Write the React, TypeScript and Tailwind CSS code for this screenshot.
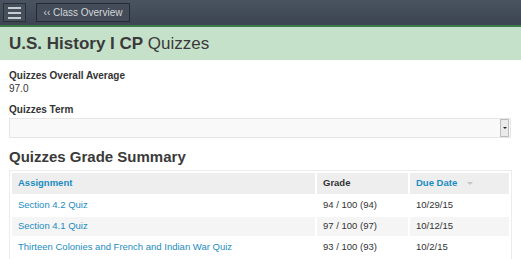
import React from "react";

const rows = [
  { name: "Section 4.2 Quiz", grade: "94 / 100 (94)", due: "10/29/15" },
  { name: "Section 4.1 Quiz", grade: "97 / 100 (97)", due: "10/12/15" },
  { name: "Thirteen Colonies and French and Indian War Quiz", grade: "93 / 100 (93)", due: "10/2/15" },
];

export default function App() {
  return (
    <div
      className="h-[259px] w-[521px] overflow-hidden bg-white text-[#333]"
      style={{ fontFamily: '"Liberation Sans", Arial, sans-serif' }}
    >
      {/* top nav */}
      <div className="flex h-[25px] items-center gap-[10px] bg-gradient-to-b from-[#4a5461] to-[#3b4450] px-[3px]">
        <button
          type="button"
          className="flex h-[19px] w-[23px] flex-col items-center justify-center gap-[3px] border border-[#2a3039] bg-[#46505c]"
        >
          <span className="h-[2px] w-[13px] bg-[#c8ccd1]" />
          <span className="h-[2px] w-[13px] bg-[#c8ccd1]" />
          <span className="h-[2px] w-[13px] bg-[#c8ccd1]" />
        </button>
        <button
          type="button"
          className="flex h-[19px] w-[94px] items-center justify-center border border-[#262b33] bg-[#434c58] text-[10px] text-[#d4d7db]"
        >
          ‹‹ Class Overview
        </button>
      </div>
      <div className="h-[2px] bg-[#3e7a49]" />

      {/* title band */}
      <div className="flex h-[33px] items-center bg-[#c5e1c9] px-[9px]">
        <h1 className="text-[17px] leading-none text-[#3a3a3a]">
          <span className="font-bold">U.S. History I CP</span> Quizzes
        </h1>
      </div>

      <div className="px-[9px] pt-[10px]">
        <div className="text-[10px] font-bold leading-[12px] text-[#333]">Quizzes Overall Average</div>
        <div className="text-[10px] leading-[13px]">97.0</div>

        <div className="mt-[9px] text-[10px] font-bold leading-[12px]">Quizzes Term</div>
        <div className="mt-[2px] flex h-[20px] w-[502px] items-center justify-end border border-[#e6e6e6] bg-[#f9f9f9] pr-[1px]">
          <div className="flex h-[18px] w-[9px] items-center justify-center border border-[#bdbdbd] bg-[#eaeaea]">
            <span className="h-0 w-0 border-x-[2px] border-t-[2px] border-x-transparent border-t-[#222]" />
          </div>
        </div>

        <h2 className="mt-[10px] text-[15px] font-bold leading-[18px] text-[#3a3a3a]">Quizzes Grade Summary</h2>

        <div className="mt-[4px] w-[503px] border-x border-t border-[#ececec]">
          <table className="w-full border-separate border-spacing-[2px] text-left text-[9.5px]">
            <thead>
              <tr className="h-[21px]">
                <th className="w-[303px] bg-[#eeeeee] px-[6px] font-bold text-[#1a8cc2]">Assignment</th>
                <th className="w-[91px] bg-[#eeeeee] px-[6px] font-bold text-[#333]">Grade</th>
                <th className="bg-[#eeeeee] px-[6px] font-bold text-[#1a8cc2]">
                  <span className="flex items-center gap-[10px]">
                    Due Date
                    <span className="h-0 w-0 border-x-[3px] border-t-[3px] border-x-transparent border-t-[#c4c4c4]" />
                  </span>
                </th>
              </tr>
            </thead>
            <tbody>
              {rows.map((r, i) => (
                <tr key={r.name} className="h-[19px]">
                  <td className={`px-[6px] text-[#1a8cc2] ${i === 1 ? "bg-[#f5f5f5]" : ""}`}>{r.name}</td>
                  <td className={`px-[6px] ${i === 1 ? "bg-[#f5f5f5]" : ""}`}>{r.grade}</td>
                  <td className={`px-[6px] ${i === 1 ? "bg-[#f5f5f5]" : ""}`}>{r.due}</td>
                </tr>
              ))}
            </tbody>
          </table>
        </div>
      </div>
      <div className="h-[2px] bg-[#dde7f2]" />
    </div>
  );
}
